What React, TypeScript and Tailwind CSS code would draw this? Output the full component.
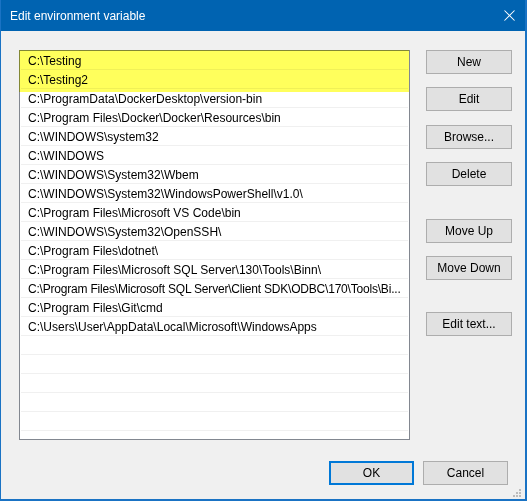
import { X } from "lucide-react";

const paths = [
  "C:\\Testing",
  "C:\\Testing2",
  "C:\\ProgramData\\DockerDesktop\\version-bin",
  "C:\\Program Files\\Docker\\Docker\\Resources\\bin",
  "C:\\WINDOWS\\system32",
  "C:\\WINDOWS",
  "C:\\WINDOWS\\System32\\Wbem",
  "C:\\WINDOWS\\System32\\WindowsPowerShell\\v1.0\\",
  "C:\\Program Files\\Microsoft VS Code\\bin",
  "C:\\WINDOWS\\System32\\OpenSSH\\",
  "C:\\Program Files\\dotnet\\",
  "C:\\Program Files\\Microsoft SQL Server\\130\\Tools\\Binn\\",
  "C:\\Program Files\\Microsoft SQL Server\\Client SDK\\ODBC\\170\\Tools\\Bi...",
  "C:\\Program Files\\Git\\cmd",
  "C:\\Users\\User\\AppData\\Local\\Microsoft\\WindowsApps",
];

// pad out with empty rows so the list fills its box
const rows = [...paths, ...Array(6).fill("")];

const sideButtons = [
  { label: "New", mt: "mt-0" },
  { label: "Edit", mt: "mt-[13px]" },
  { label: "Browse...", mt: "mt-[14px]" },
  { label: "Delete", mt: "mt-[13px]" },
  { label: "Move Up", mt: "mt-[33px]" },
  { label: "Move Down", mt: "mt-[13px]" },
  { label: "Edit text...", mt: "mt-[32px]" },
];

function Button({ label, className = "" }: { label: string; className?: string }) {
  return (
    <button
      className={`h-[24px] bg-[#e1e1e1] border border-[#adadad] text-[12px] text-black leading-none ${className}`}
    >
      {label}
    </button>
  );
}

export default function App() {
  return (
    <div className="w-[527px] h-[501px] bg-white font-['Segoe_UI','Liberation_Sans',Arial,sans-serif]">
      <div className="w-[527px] h-[501px] flex flex-col bg-[#f0f0f0] border-l border-r-2 border-b-2 border-[#1a73c4]">
        {/* title bar */}
        <div className="h-[31px] shrink-0 bg-[#0063b1] flex items-center justify-between pl-[9px] pr-[6px] text-white">
          <span className="text-[12px]">Edit environment variable</span>
          <X size={19} strokeWidth={1.3} className="text-white" />
        </div>

        <div className="flex pt-[19px] pl-[18px]">
          {/* path list */}
          <div className="relative w-[391px] h-[390px] bg-white border border-[#828790]">
            <div className="h-full overflow-hidden">
              {rows.map((p, i) => (
                <div
                  key={i}
                  className="h-[19px] mx-px border-b border-[#f0f0f0] pl-[7px] pt-px flex items-center text-[12px] text-black whitespace-nowrap overflow-hidden"
                >
                  <span className={p.endsWith("...") ? "tracking-[-0.2px]" : ""}>{p}</span>
                </div>
              ))}
            </div>
            {/* highlighter over the first two entries */}
            <div className="absolute -left-px -top-px w-[390px] h-[42px] bg-[#ffff5c] mix-blend-multiply pointer-events-none" />
          </div>

          <div className="flex flex-col w-[86px] ml-[16px]">
            {sideButtons.map((b) => (
              <Button key={b.label} label={b.label} className={`w-[86px] ${b.mt}`} />
            ))}
          </div>
        </div>

        <div className="flex justify-end gap-[9px] pr-[17px] mt-[21px]">
          <button className="w-[85px] h-[24px] bg-[#e1e1e1] border-2 border-[#0078d7] text-[12px] text-black">
            OK
          </button>
          <Button label="Cancel" className="w-[85px]" />
        </div>

        {/* size grip */}
        <div className="flex-1 flex items-end justify-end pr-[3px] pb-[1px]">
          <svg width="9" height="9" viewBox="0 0 9 9" fill="#bcbcbc">
            <rect x="6" y="0" width="2" height="2" />
            <rect x="3" y="3" width="2" height="2" />
            <rect x="6" y="3" width="2" height="2" />
            <rect x="0" y="6" width="2" height="2" />
            <rect x="3" y="6" width="2" height="2" />
            <rect x="6" y="6" width="2" height="2" />
          </svg>
        </div>
      </div>
    </div>
  );
}
